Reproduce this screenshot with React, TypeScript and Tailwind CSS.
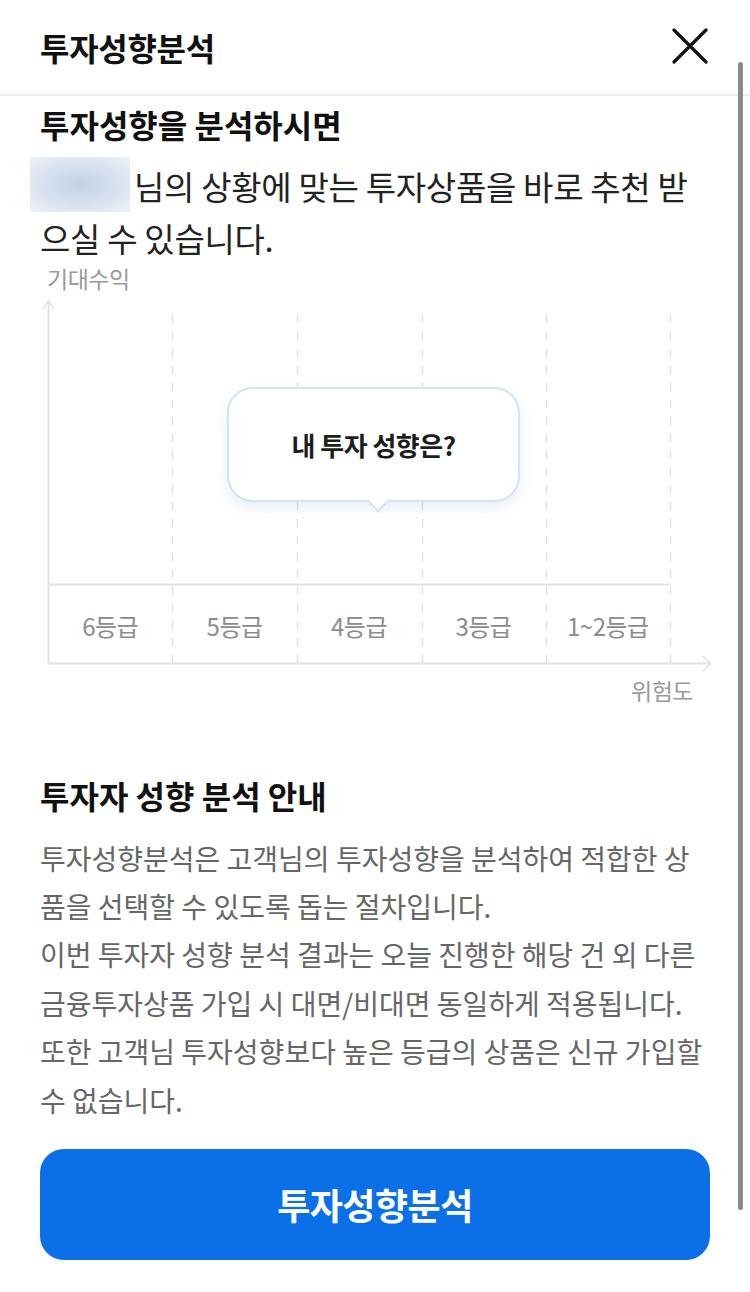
const grades = ["6등급", "5등급", "4등급", "3등급", "1~2등급"];

function RiskChart() {
  return (
    <div className="relative mt-[6px] h-[374px] w-[680px]">
      {/* axes + grid lines */}
      <svg className="absolute inset-0" width="680" height="374" viewBox="0 0 680 374" fill="none">
        <g stroke="#e2e2e2" strokeWidth="2">
          <line x1="8.5" y1="3" x2="8.5" y2="366" />
          <polyline points="3,11 8.5,3 14,11" strokeWidth="1.6" />
          <line x1="8" y1="365.5" x2="670" y2="365.5" />
          <polyline points="663,358 670.5,365.5 663,373" strokeWidth="1.6" />
          <line x1="8" y1="286.5" x2="630" y2="286.5" />
        </g>
        <g stroke="#dedede" strokeWidth="1.3" strokeDasharray="8 9">
          {[132.5, 257.5, 382.5, 506.5, 630.5].map((x) => (
            <line key={x} x1={x} y1="17" x2={x} y2="365" />
          ))}
        </g>
      </svg>

      {/* speech bubble */}
      <div className="absolute left-[187px] top-[89px] flex h-[115px] w-[293px] items-center justify-center rounded-[26px] border-2 border-[#d3e3f6] bg-white shadow-[0_6px_14px_rgba(160,190,225,0.25)]">
        <span className="text-[26px] font-bold tracking-[-0.5px] text-[#1d1d1d]">내 투자 성향은?</span>
        <div className="absolute bottom-[-9px] left-[141px] h-[16px] w-[16px] rotate-45 border-b-2 border-r-2 border-[#d3e3f6] bg-white" />
      </div>

      <div className="relative flex h-[374px] flex-col justify-end">
        <div className="ml-[8px] flex h-[79px] w-[622px] items-center pb-[12px]">
          {grades.map((g) => (
            <div key={g} className="flex-1 text-center text-[24px] tracking-[-0.5px] text-[#8c8c8c]">
              {g}
            </div>
          ))}
        </div>
      </div>
    </div>
  );
}

export default function App() {
  return (
    <div className="relative min-h-[1292px] w-[750px] overflow-hidden bg-white font-['Noto_Sans_CJK_KR','Noto_Sans',sans-serif]">
      {/* Header */}
      <header className="flex h-[96px] items-center justify-between border-b-2 border-[#eeeeee] pl-10 pr-[42px]">
        <h1 className="text-[32px] font-bold tracking-[-0.3px] text-[#111]">투자성향분석</h1>
        <svg width="36" height="36" viewBox="0 0 36 36" className="-mt-[2px]">
          <path d="M2 2L34 34M34 2L2 34" stroke="#111" strokeWidth="3.2" strokeLinecap="round" />
        </svg>
      </header>

      {/* scrollbar */}
      <div className="absolute right-[7px] top-[62px] h-[1148px] w-[5px] rounded-full bg-[#8a8a8a]" />

      <main className="px-10">
        <h2 className="mt-[8px] text-[32px] font-bold leading-[40px] text-[#111]">투자성향을 분석하시면</h2>
        <p className="mt-[17px] text-[33px] leading-[51px] tracking-[-0.3px] text-[#222]">
          <span className="-ml-[10px] -mt-[13px] mb-[1px] mr-[4px] inline-block h-[55px] w-[100px] bg-[radial-gradient(ellipse_at_center,#c3d2e6_0%,#d8e2ef_55%,#eef2f7_100%)] align-middle" />
          님의 상황에 맞는 투자상품을 바로 추천 받으실 수 있습니다.
        </p>

        <p className="pl-[7px] text-[23px] leading-[28px] tracking-[-0.5px] text-[#999]">기대수익</p>
        <RiskChart />
        <p className="mr-[17px] mt-[4px] text-right text-[23px] leading-[28px] tracking-[-0.5px] text-[#999]">
          위험도
        </p>

        <h3 className="mt-[71px] text-[32px] font-bold leading-[40px] text-[#111]">투자자 성향 분석 안내</h3>
        <p className="mt-[19px] text-[28px] leading-[48.4px] text-[#666]">
          투자성향분석은 고객님의 투자성향을 분석하여 적합한 상품을 선택할 수 있도록 돕는 절차입니다.
          <br />
          이번 투자자 성향 분석 결과는 오늘 진행한 해당 건 외 다른 금융투자상품 가입 시 대면/비대면 동일하게 적용됩니다.
          <br />
          또한 고객님 투자성향보다 높은 등급의 상품은 신규 가입할 수 없습니다.
        </p>

        <button className="mt-[25px] flex h-[111px] w-full items-center justify-center rounded-[24px] bg-[#0b6fe8] text-[36px] font-bold tracking-[-0.5px] text-white">
          투자성향분석
        </button>
      </main>
    </div>
  );
}
